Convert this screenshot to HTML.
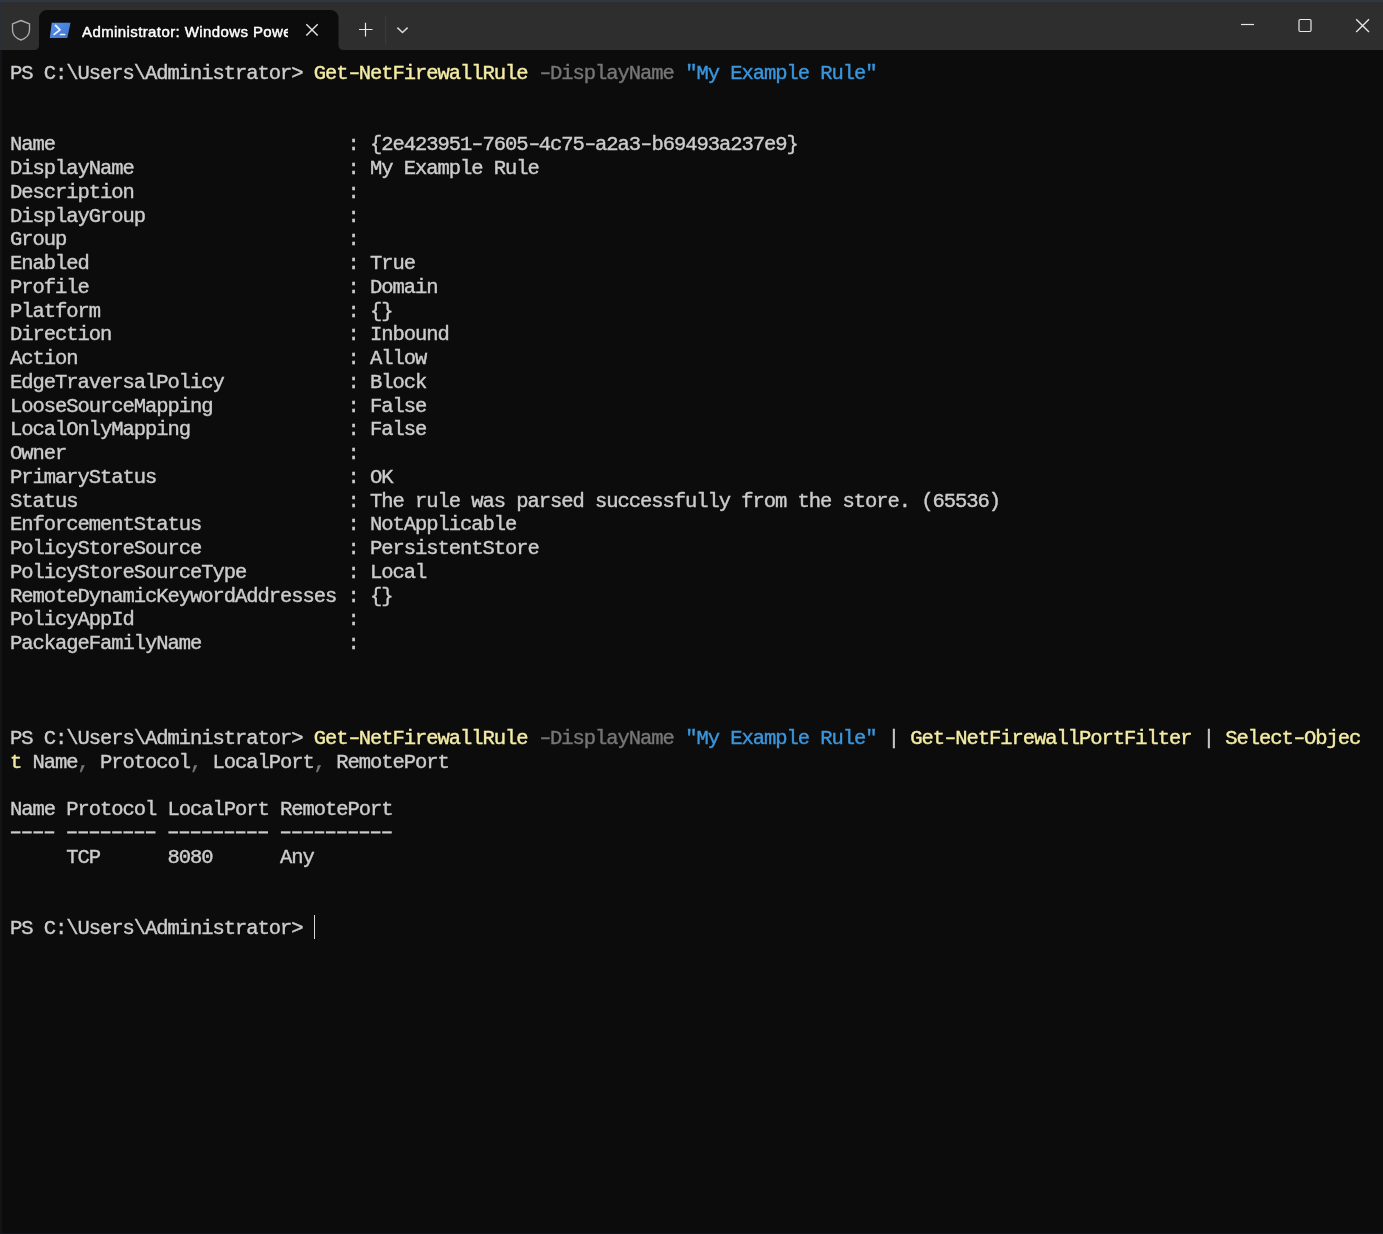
<!DOCTYPE html>
<html><head><meta charset="utf-8">
<style>
html,body{margin:0;padding:0;}
body{width:1383px;height:1234px;background:#0c0c0c;position:relative;overflow:hidden;}
#bar{position:absolute;left:0;top:0;width:1383px;height:50px;background:#2e2e2e;}
#strip{position:absolute;left:0;top:0;width:1383px;height:2px;background:#2e3843;}
#shieldbox{position:absolute;left:0;top:9px;width:38px;height:41px;background:#323232;border-radius:0 8px 8px 0;}
#tab{position:absolute;left:40px;top:10px;width:298px;height:40px;background:#0c0c0c;border-radius:8px 8px 0 0;}
.ttl{position:absolute;left:82px;top:22.5px;width:206px;overflow:hidden;font-family:"Liberation Sans",sans-serif;font-size:15px;letter-spacing:0.4px;color:#ffffff;white-space:pre;will-change:transform;-webkit-text-stroke:0.45px #ffffff;}
.term{position:absolute;left:10px;margin-top:2px;font-family:"Liberation Mono",monospace;font-size:20.5px;letter-spacing:-1.052px;line-height:23.75px;height:23.75px;white-space:pre;color:#cccccc;will-change:transform;-webkit-text-stroke:0.4px currentColor;}
.y{color:#f4eca4}.g{color:#767676}.b{color:#3a96dd}
#cursor{position:absolute;left:313.7px;top:915px;width:1.4px;height:24px;background:#d8d8d8;}
.h{display:inline-block;font-style:normal;transform:scaleX(1.4);}
</style></head><body>
<div id="bar"></div>
<div id="strip"></div>
<div style="position:absolute;left:0;top:2px;width:1px;height:48px;background:#2a2f35"></div>
<div style="position:absolute;left:0;top:50px;width:1.5px;height:1184px;background:#121518"></div>
<div style="position:absolute;left:0;top:1232.5px;width:1383px;height:1.5px;background:#111519"></div>
<svg style="position:absolute;left:0;top:0" width="1383" height="50" viewBox="0 0 1383 50">
  <!-- shield -->
  <path d="M21 20.5 L29.5 23.8 V30 C29.5 35 25.8 38.3 21 40 C16.2 38.3 12.5 35 12.5 30 V23.8 Z" fill="none" stroke="#acacac" stroke-width="1.35" stroke-linejoin="round"/>
</svg>
<svg style="position:absolute;left:0;top:0" width="1383" height="50" viewBox="0 0 1383 50">
  <defs><linearGradient id="psg" x1="0" y1="0" x2="1" y2="1"><stop offset="0" stop-color="#5a93ee"/><stop offset="1" stop-color="#3a72cc"/></linearGradient></defs>
  <path d="M34.5 50 A4.5 4.5 0 0 0 39 45.5 V18 A8 8 0 0 1 47 10 H330.5 A8 8 0 0 1 338.5 18 V45.5 A4.5 4.5 0 0 0 343 50 Z" fill="#0c0c0c"/>
  <!-- powershell icon -->
  <path d="M51.8 22.7 H70.5 L67.3 38 H49.8 Z" fill="url(#psg)"/>
  <path d="M55.6 25.5 L60 29.9 L54.2 34.4" fill="none" stroke="#eef4ff" stroke-width="1.8" stroke-linecap="round" stroke-linejoin="round"/>
  <path d="M60.6 34.5 H64.6" stroke="#eef4ff" stroke-width="1.7" stroke-linecap="round"/>
  <!-- tab close -->
  <path d="M306.3 24.3 L317.7 35.5 M317.7 24.3 L306.3 35.5" stroke="#e4e4e4" stroke-width="1.45"/>
  <!-- plus -->
  <path d="M359 29.5 H372.5 M365.5 22.8 V36.6" stroke="#e8e8e8" stroke-width="1.2"/>
  <!-- separator -->
  <path d="M385.7 15.5 V44.5" stroke="#3d3d3d" stroke-width="1"/>
  <!-- chevron -->
  <path d="M397.4 27.6 L402.5 32.5 L407.6 27.6" fill="none" stroke="#d8d8d8" stroke-width="1.5"/>
  <!-- minimize -->
  <path d="M1241 24.5 H1254" stroke="#e8e8e8" stroke-width="1.2"/>
  <!-- maximize -->
  <rect x="1299" y="19.5" width="12" height="12" rx="1.2" fill="none" stroke="#e8e8e8" stroke-width="1.2"/>
  <!-- close -->
  <path d="M1356.2 19.2 L1369 32 M1369 19.2 L1356.2 32" stroke="#e4e4e4" stroke-width="1.4"/>
</svg>
<div class="ttl">Administrator: Windows Powe</div>

<div class="term" style="top:60px">PS C:\Users\Administrator&gt; <span class="y">Get<i class="h">-</i>NetFirewallRule</span> <span class="g"><i class="h">-</i>DisplayName</span> <span class="b">"My Example Rule"</span></div>
<div class="term" style="top:131.25px">Name                          : {2e423951<i class="h">-</i>7605<i class="h">-</i>4c75<i class="h">-</i>a2a3<i class="h">-</i>b69493a237e9}</div>
<div class="term" style="top:155px">DisplayName                   : My Example Rule</div>
<div class="term" style="top:178.75px">Description                   :</div>
<div class="term" style="top:202.5px">DisplayGroup                  :</div>
<div class="term" style="top:226.25px">Group                         :</div>
<div class="term" style="top:250px">Enabled                       : True</div>
<div class="term" style="top:273.75px">Profile                       : Domain</div>
<div class="term" style="top:297.5px">Platform                      : {}</div>
<div class="term" style="top:321.25px">Direction                     : Inbound</div>
<div class="term" style="top:345px">Action                        : Allow</div>
<div class="term" style="top:368.75px">EdgeTraversalPolicy           : Block</div>
<div class="term" style="top:392.5px">LooseSourceMapping            : False</div>
<div class="term" style="top:416.25px">LocalOnlyMapping              : False</div>
<div class="term" style="top:440px">Owner                         :</div>
<div class="term" style="top:463.75px">PrimaryStatus                 : OK</div>
<div class="term" style="top:487.5px">Status                        : The rule was parsed successfully from the store. (65536)</div>
<div class="term" style="top:511.25px">EnforcementStatus             : NotApplicable</div>
<div class="term" style="top:535px">PolicyStoreSource             : PersistentStore</div>
<div class="term" style="top:558.75px">PolicyStoreSourceType         : Local</div>
<div class="term" style="top:582.5px">RemoteDynamicKeywordAddresses : {}</div>
<div class="term" style="top:606.25px">PolicyAppId                   :</div>
<div class="term" style="top:630px">PackageFamilyName             :</div>
<div class="term" style="top:725px">PS C:\Users\Administrator&gt; <span class="y">Get<i class="h">-</i>NetFirewallRule</span> <span class="g"><i class="h">-</i>DisplayName</span> <span class="b">"My Example Rule"</span> | <span class="y">Get<i class="h">-</i>NetFirewallPortFilter</span> | <span class="y">Select<i class="h">-</i>Objec</span></div>
<div class="term" style="top:748.75px"><span class="y">t</span> Name<span class="g">,</span> Protocol<span class="g">,</span> LocalPort<span class="g">,</span> RemotePort</div>
<div class="term" style="top:796.25px">Name Protocol LocalPort RemotePort</div>
<div class="term" style="top:843.75px">     TCP      8080      Any</div>
<div class="term" style="top:915px">PS C:\Users\Administrator&gt; </div>
<svg style="position:absolute;left:0;top:0" width="1383" height="1234" fill="#cccccc"><rect x="10.90" y="831.3" width="9.6" height="2.2"/><rect x="22.15" y="831.3" width="9.6" height="2.2"/><rect x="33.40" y="831.3" width="9.6" height="2.2"/><rect x="44.65" y="831.3" width="9.6" height="2.2"/><rect x="67.15" y="831.3" width="9.6" height="2.2"/><rect x="78.40" y="831.3" width="9.6" height="2.2"/><rect x="89.65" y="831.3" width="9.6" height="2.2"/><rect x="100.90" y="831.3" width="9.6" height="2.2"/><rect x="112.15" y="831.3" width="9.6" height="2.2"/><rect x="123.40" y="831.3" width="9.6" height="2.2"/><rect x="134.65" y="831.3" width="9.6" height="2.2"/><rect x="145.90" y="831.3" width="9.6" height="2.2"/><rect x="168.40" y="831.3" width="9.6" height="2.2"/><rect x="179.65" y="831.3" width="9.6" height="2.2"/><rect x="190.90" y="831.3" width="9.6" height="2.2"/><rect x="202.15" y="831.3" width="9.6" height="2.2"/><rect x="213.40" y="831.3" width="9.6" height="2.2"/><rect x="224.65" y="831.3" width="9.6" height="2.2"/><rect x="235.90" y="831.3" width="9.6" height="2.2"/><rect x="247.15" y="831.3" width="9.6" height="2.2"/><rect x="258.40" y="831.3" width="9.6" height="2.2"/><rect x="280.90" y="831.3" width="9.6" height="2.2"/><rect x="292.15" y="831.3" width="9.6" height="2.2"/><rect x="303.40" y="831.3" width="9.6" height="2.2"/><rect x="314.65" y="831.3" width="9.6" height="2.2"/><rect x="325.90" y="831.3" width="9.6" height="2.2"/><rect x="337.15" y="831.3" width="9.6" height="2.2"/><rect x="348.40" y="831.3" width="9.6" height="2.2"/><rect x="359.65" y="831.3" width="9.6" height="2.2"/><rect x="370.90" y="831.3" width="9.6" height="2.2"/><rect x="382.15" y="831.3" width="9.6" height="2.2"/></svg>
<div id="cursor"></div>
</body></html>
